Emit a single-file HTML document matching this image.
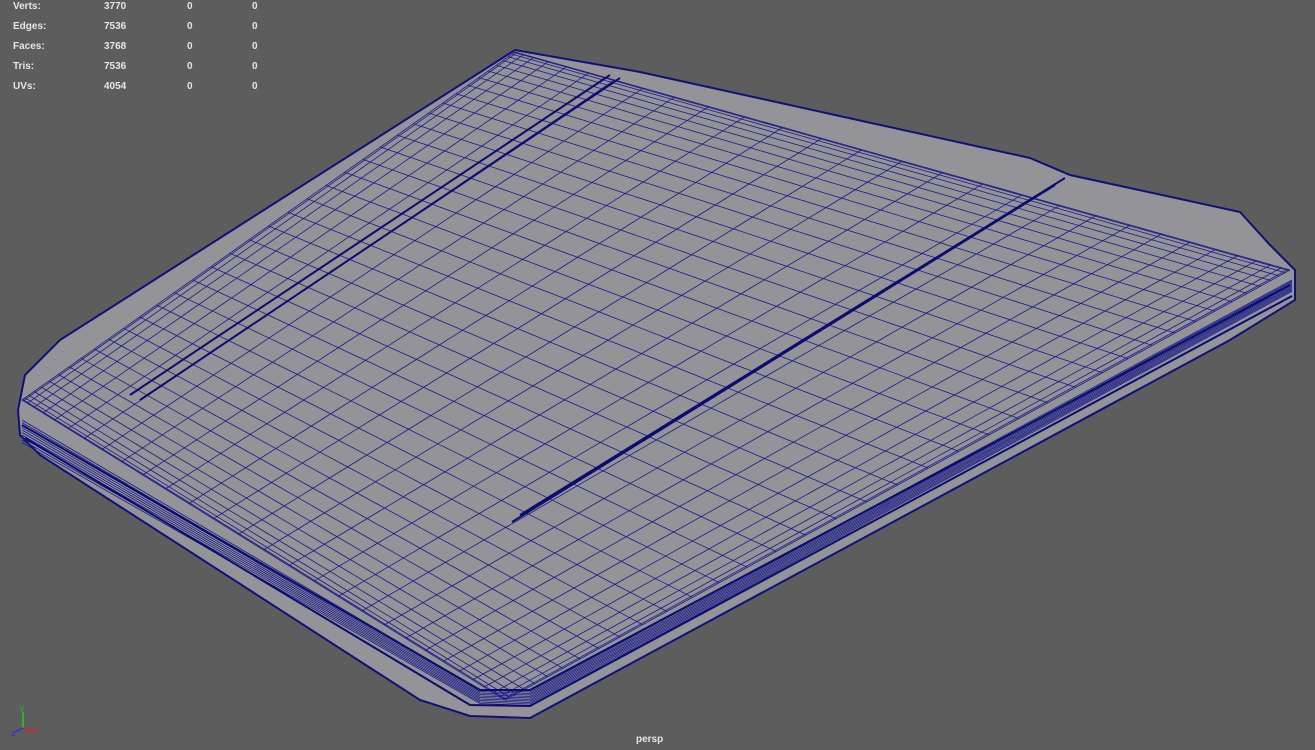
<!DOCTYPE html>
<html><head><meta charset="utf-8"><style>
html,body{margin:0;padding:0;width:1315px;height:750px;overflow:hidden;background:#5d5d5d;font-family:"Liberation Sans",Arial,sans-serif}
#stats{position:absolute;left:0;top:1px;color:#e6e6e6;font-size:10px;font-weight:bold}
#stats div{position:absolute;white-space:nowrap}
#persp{position:absolute;left:636px;top:734px;color:#e6e6e6;font-size:10px;font-weight:bold}
svg{position:absolute;left:0;top:0}
</style></head><body>
<svg id="s" width="1315" height="750" viewBox="0 0 1315 750">
<polygon points="18,410 25,375 60,340 515,50 640,72 1030,158 1070,175 1240,212 1270,245 1295,270 1295,300 1230,340 530,718 470,716 420,700 40,455 20,435" fill="#939398" stroke="#10107a" stroke-width="2"/>
<g id="g" stroke="#1a1a88" stroke-width="0.8" fill="none"></g>
<g stroke="#0c0c70" stroke-width="2" fill="none">
<path d="M610,75 L130,395"/><path d="M620,78 L140,400"/>
<path d="M1065,178 L520,515"/><path d="M1055,185 L512,522"/>
<path d="M22,425 L480,690 L530,690 L1290,285"/>
<path d="M25,438 L470,705 L530,706 L1292,296"/>
</g>
</svg>
<div id="stats">
<div style="left:13px;top:0">Verts:</div><div style="left:104px;top:0">3770</div><div style="left:187px;top:0">0</div><div style="left:252px;top:0">0</div>
<div style="left:13px;top:20px">Edges:</div><div style="left:104px;top:20px">7536</div><div style="left:187px;top:20px">0</div><div style="left:252px;top:20px">0</div>
<div style="left:13px;top:40px">Faces:</div><div style="left:104px;top:40px">3768</div><div style="left:187px;top:40px">0</div><div style="left:252px;top:40px">0</div>
<div style="left:13px;top:60px">Tris:</div><div style="left:104px;top:60px">7536</div><div style="left:187px;top:60px">0</div><div style="left:252px;top:60px">0</div>
<div style="left:13px;top:80px">UVs:</div><div style="left:104px;top:80px">4054</div><div style="left:187px;top:80px">0</div><div style="left:252px;top:80px">0</div>
</div>
<svg width="50" height="50" style="left:5px;top:700px" viewBox="0 0 50 50">
<line x1="18" y1="28" x2="18" y2="12" stroke="#2c2" stroke-width="1.5"/>
<line x1="18" y1="28" x2="30" y2="32" stroke="#d22" stroke-width="1.5"/>
<line x1="18" y1="28" x2="10" y2="32" stroke="#23d" stroke-width="1.5"/>
<text x="15" y="11" fill="#2c2" font-size="8" font-family="Liberation Sans">y</text>
<text x="30" y="31" fill="#d22" font-size="8" font-family="Liberation Sans">x</text>
<text x="6" y="36" fill="#23d" font-size="8" font-family="Liberation Sans">z</text>
</svg>
<div id="persp">persp</div>
<script>
var g=document.getElementById('g'),ns='http://www.w3.org/2000/svg';
var A=[22,400],B=[515,52],C=[1290,270],D=[505,700];
function P(u,v){var x=(1-u)*(1-v)*A[0]+u*(1-v)*B[0]+u*v*C[0]+(1-u)*v*D[0];var y=(1-u)*(1-v)*A[1]+u*(1-v)*B[1]+u*v*C[1]+(1-u)*v*D[1];return x.toFixed(1)+','+y.toFixed(1);}
function line(pts){var p=document.createElementNS(ns,'polyline');p.setAttribute('points',pts.join(' '));g.appendChild(p);}
var us=[],vs=[];
for(var i=0;i<=40;i++){var t=i/40;us.push(0.5-0.5*Math.cos(Math.PI*t));}
for(var j=0;j<=30;j++){var t=j/30;vs.push(0.5-0.5*Math.cos(Math.PI*t));}
us.forEach(function(u){var a=[];for(var k=0;k<=20;k++)a.push(P(u,k/20));line(a);});
vs.forEach(function(v){var a=[];for(var k=0;k<=20;k++)a.push(P(k/20,v));line(a);});
for(var k=0;k<10;k++){var d=k*2.5;line(['22,'+(420+d),'480,'+(690+d*0.6),'530,'+(692+d*0.6),'1292,'+(280+d*0.5)]);}
</script>
</body></html>
